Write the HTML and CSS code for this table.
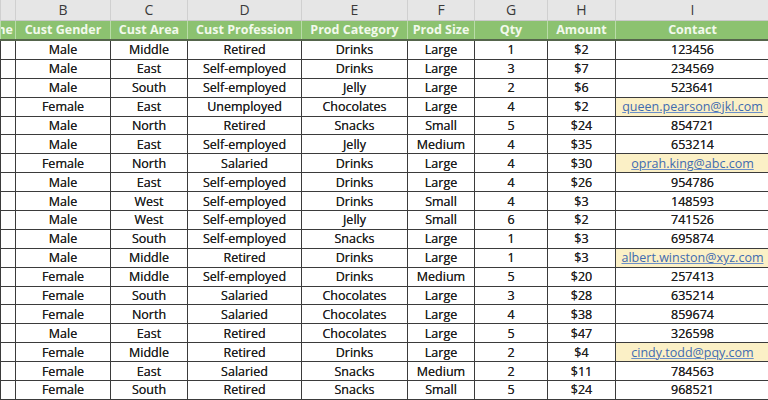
FILE: index.html
```html
<!DOCTYPE html>
<html>
<head>
<meta charset="utf-8">
<link rel="stylesheet" href="styles.css">
</head>
<body>
<table class="sheet">
  <colgroup>
    <col class="c-a"><col class="c-b"><col class="c-c"><col class="c-d"><col class="c-e">
    <col class="c-f"><col class="c-g"><col class="c-h"><col class="c-i">
  </colgroup>
  <thead>
    <tr class="letters">
      <th></th><th>B</th><th>C</th><th>D</th><th>E</th><th>F</th><th>G</th><th>H</th><th>I</th>
    </tr>
    <tr class="head">
      <th class="clip"><div class="clip-in"><span>Name</span></div></th><th>Cust Gender</th><th>Cust Area</th><th>Cust Profession</th><th>Prod Category</th><th>Prod Size</th><th>Qty</th><th>Amount</th><th>Contact</th>
    </tr>
  </thead>
  <tbody>
    <tr><td></td><td>Male</td><td>Middle</td><td>Retired</td><td>Drinks</td><td>Large</td><td>1</td><td>$2</td><td>123456</td></tr>
    <tr><td></td><td>Male</td><td>East</td><td>Self-employed</td><td>Drinks</td><td>Large</td><td>3</td><td>$7</td><td>234569</td></tr>
    <tr><td></td><td>Male</td><td>South</td><td>Self-employed</td><td>Jelly</td><td>Large</td><td>2</td><td>$6</td><td>523641</td></tr>
    <tr><td></td><td>Female</td><td>East</td><td>Unemployed</td><td>Chocolates</td><td>Large</td><td>4</td><td>$2</td><td class="mail"><span>queen.pearson@jkl.com</span></td></tr>
    <tr><td></td><td>Male</td><td>North</td><td>Retired</td><td>Snacks</td><td>Small</td><td>5</td><td>$24</td><td>854721</td></tr>
    <tr><td></td><td>Male</td><td>East</td><td>Self-employed</td><td>Jelly</td><td>Medium</td><td>4</td><td>$35</td><td>653214</td></tr>
    <tr><td></td><td>Female</td><td>North</td><td>Salaried</td><td>Drinks</td><td>Large</td><td>4</td><td>$30</td><td class="mail"><span>oprah.king@abc.com</span></td></tr>
    <tr><td></td><td>Male</td><td>East</td><td>Self-employed</td><td>Drinks</td><td>Large</td><td>4</td><td>$26</td><td>954786</td></tr>
    <tr><td></td><td>Male</td><td>West</td><td>Self-employed</td><td>Drinks</td><td>Small</td><td>4</td><td>$3</td><td>148593</td></tr>
    <tr><td></td><td>Male</td><td>West</td><td>Self-employed</td><td>Jelly</td><td>Small</td><td>6</td><td>$2</td><td>741526</td></tr>
    <tr><td></td><td>Male</td><td>South</td><td>Self-employed</td><td>Snacks</td><td>Large</td><td>1</td><td>$3</td><td>695874</td></tr>
    <tr><td></td><td>Male</td><td>Middle</td><td>Retired</td><td>Drinks</td><td>Large</td><td>1</td><td>$3</td><td class="mail"><span>albert.winston@xyz.com</span></td></tr>
    <tr><td></td><td>Female</td><td>Middle</td><td>Self-employed</td><td>Drinks</td><td>Medium</td><td>5</td><td>$20</td><td>257413</td></tr>
    <tr><td></td><td>Female</td><td>South</td><td>Salaried</td><td>Chocolates</td><td>Large</td><td>3</td><td>$28</td><td>635214</td></tr>
    <tr><td></td><td>Female</td><td>North</td><td>Salaried</td><td>Chocolates</td><td>Large</td><td>4</td><td>$38</td><td>859674</td></tr>
    <tr><td></td><td>Male</td><td>East</td><td>Retired</td><td>Chocolates</td><td>Large</td><td>5</td><td>$47</td><td>326598</td></tr>
    <tr><td></td><td>Female</td><td>Middle</td><td>Retired</td><td>Drinks</td><td>Large</td><td>2</td><td>$4</td><td class="mail"><span>cindy.todd@pqy.com</span></td></tr>
    <tr><td></td><td>Female</td><td>East</td><td>Salaried</td><td>Snacks</td><td>Medium</td><td>2</td><td>$11</td><td>784563</td></tr>
    <tr><td></td><td>Female</td><td>South</td><td>Retired</td><td>Snacks</td><td>Small</td><td>5</td><td>$24</td><td>968521</td></tr>
  </tbody>
</table>
</body>
</html>
```
FILE: styles.css
```css
html, body {
  margin: 0;
  padding: 0;
  background: #ffffff;
  overflow: hidden;
}
.sheet {
  table-layout: fixed;
  border-collapse: collapse;
  width: 769px;
  font-family: "Open Sans", "Liberation Sans", sans-serif;
  font-size: 12.5px;
  color: #1f1f1f;
}
.c-a { width: 15px; }
.c-b { width: 95px; }
.c-c { width: 77px; }
.c-d { width: 114px; }
.c-e { width: 106px; }
.c-f { width: 67px; }
.c-g { width: 73px; }
.c-h { width: 68px; }
.c-i { width: 154px; }

.sheet th, .sheet td {
  padding: 0;
  text-align: center;
  white-space: nowrap;
  overflow: hidden;
}
.letters th {
  height: 20px;
  line-height: 20px;
  background: #e6e6e6;
  color: #3a3a3a;
  font-weight: 400;
  font-size: 14px;
  border-left: 1px solid #d0d0d0;
  border-right: 1px solid #d0d0d0;
  border-bottom: 1px solid #c9c9c9;
}
.head th {
  height: 18px;
  line-height: 18px;
  background: #8cc270;
  color: #f2f9ec;
  font-weight: 700;
  font-size: 12.5px;
  border-left: 1px solid #b9dca8;
  border-right: 1px solid #b9dca8;
  border-bottom: 2px solid #55654c;
}
.clip-in {
  display: flex;
  justify-content: flex-end;
  overflow: hidden;
  width: 14px;
}
.clip-in span {
  flex: none;
  margin-right: 2px;
}
.sheet td {
  height: 17.9px;
  line-height: 17px;
  border: 1px solid #3b3b3b;
  text-shadow: 0 0 0.4px #333;
}
.sheet td.mail {
  background: #fbf0c6;
}
.mail span {
  color: #3f6bb0;
  text-decoration: underline;
  text-decoration-color: #6b8fc8;
  text-shadow: none;
}
```
